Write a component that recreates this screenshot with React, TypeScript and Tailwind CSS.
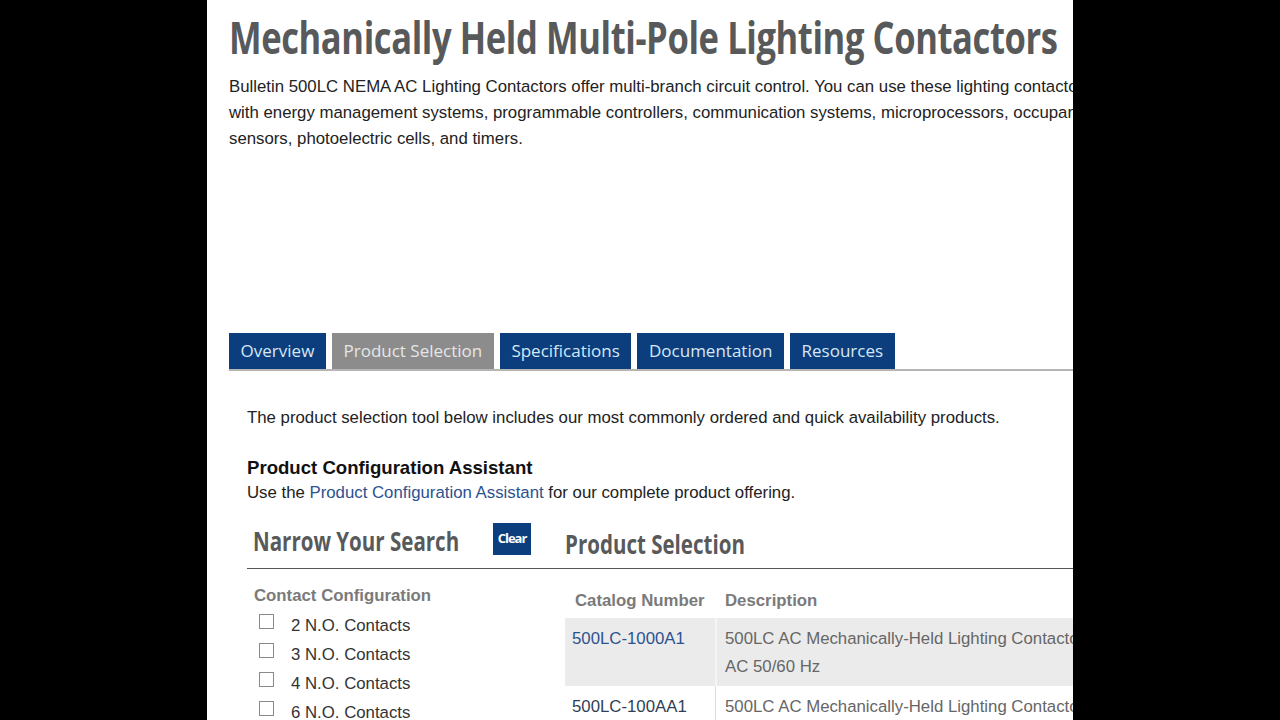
import React from "react";

const sans = "font-['Liberation_Sans',Arial,sans-serif]";
const open = "font-['Open_Sans',sans-serif]";

const Condensed = ({ children, className }: { children: React.ReactNode; className: string }) => (
  <span className={`inline-block origin-left whitespace-nowrap font-bold ${open} ${className}`}>{children}</span>
);

const tabs = ["Overview", "Product Selection", "Specifications", "Documentation", "Resources"];
const contacts = ["2 N.O. Contacts", "3 N.O. Contacts", "4 N.O. Contacts", "6 N.O. Contacts"];

export default function App() {
  return (
    <div className="flex min-h-[720px] justify-center bg-black">
      <div className={`w-[866px] overflow-hidden bg-white pl-[22px] ${sans}`}>
        <h1 className="mt-[10px] h-[54px] leading-[54px] text-[#58595b]">
          <Condensed className="text-[44px] tracking-[-0.5px] scale-x-[0.785]">
            Mechanically Held Multi-Pole Lighting Contactors
          </Condensed>
        </h1>
        <p className="mt-[10px] whitespace-nowrap text-[16.8px] leading-[26px] text-[#222]">
          Bulletin 500LC NEMA AC Lighting Contactors offer multi-branch circuit control. You can use these lighting contactors
          <br />
          with energy management systems, programmable controllers, communication systems, microprocessors, occupancy
          <br />
          sensors, photoelectric cells, and timers.
        </p>

        <div className="mt-[181px] flex gap-[6px] border-b-2 border-[#b5b5b5]">
          {tabs.map((t) => (
            <div
              key={t}
              className={`flex h-[36px] items-center px-[11.6px] text-[17px] ${open} ${
                t === "Product Selection" ? "bg-[#8c8c8c] text-[#e6e6e6]" : "bg-[#0c3d7c] text-[#d4e8f7]"
              }`}
            >
              {t}
            </div>
          ))}
        </div>

        <div className="pl-[18px] text-[16.8px]">
          <p className="mt-[36px] whitespace-nowrap leading-[22px] text-[#222]">
            The product selection tool below includes our most commonly ordered and quick availability products.
          </p>
          <p className="mt-[26px] text-[18.6px] font-bold leading-[25px] text-[#111]">Product Configuration Assistant</p>
          <p className="whitespace-nowrap leading-[25px] text-[#222]">
            Use the <span className="text-[#2c5290]">Product Configuration Assistant</span> for our complete product offering.
          </p>

          <div className="mt-[10px] grid grid-cols-[318px_1fr]">
            <div>
              <div className="flex h-[54px] items-center border-b-[1.5px] border-[#555] pl-[6px]">
                <div className="w-[210px] shrink-0">
                  <Condensed className="text-[27px] text-[#58595b] scale-x-[0.76]">Narrow Your Search</Condensed>
                </div>
                <div className="mb-[6px] ml-auto mr-[34px] flex h-[32px] w-[38px] shrink-0 items-center justify-center overflow-hidden bg-[#0c3d7c]">
                  <span className={`whitespace-nowrap text-[13px] font-bold tracking-[-1px] text-white ${open}`}>Clear</span>
                </div>
              </div>
              <p className="mt-[16px] pl-[7px] font-bold leading-[22px] text-[#7a7a7a]">Contact Configuration</p>
              <div className="mt-[4px] flex flex-col">
                {contacts.map((c) => (
                  <div key={c} className="flex h-[29px] items-center pl-[12px]">
                    <span className="mb-[8px] h-[15px] w-[15px] shrink-0 border border-[#8a8a8a] bg-white" />
                    <span className="ml-[17px] text-[#333]">{c}</span>
                  </div>
                ))}
              </div>
            </div>

            <div>
              <div className="flex h-[54px] items-center border-b-[1.5px] border-[#555] pt-[6px]">
                <Condensed className="text-[27px] text-[#58595b] scale-x-[0.76]">Product Selection</Condensed>
              </div>
              <div className="mt-[19px] w-[700px]">
                <div className="flex h-[25px] items-center font-bold text-[#7a7a7a]">
                  <div className="w-[150px] pl-[10px]">Catalog Number</div>
                  <div className="pl-[10px]">Description</div>
                </div>
                <div className="mt-[5px] flex bg-[#ebebeb] leading-[28px]">
                  <div className="w-[150px] shrink-0 px-[7px] pb-[5px] pt-[7px] text-[#2c5290]">500LC-1000A1</div>
                  <div className="border-l-2 border-[#f5f5f5] px-[8px] pb-[5px] pt-[7px] whitespace-nowrap text-[#666]">
                    500LC AC Mechanically-Held Lighting Contactor, 10 A, 2 Pole, Coil 120V
                    <br />
                    AC 50/60 Hz
                  </div>
                </div>
                <div className="flex leading-[28px]">
                  <div className="w-[150px] shrink-0 px-[7px] pb-[5px] pt-[7px] text-[#2f3f55]">500LC-100AA1</div>
                  <div className="border-l border-[#ddd] px-[9px] pb-[5px] pt-[7px] whitespace-nowrap text-[#666]">
                    500LC AC Mechanically-Held Lighting Contactor, 10 A, 2 Pole, Coil 24V
                    <br />
                    AC 50/60 Hz
                  </div>
                </div>
              </div>
            </div>
          </div>
        </div>
      </div>
    </div>
  );
}
